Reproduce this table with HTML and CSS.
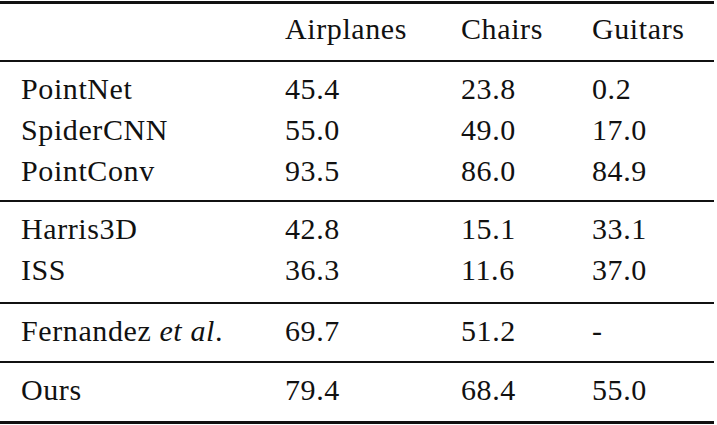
FILE: index.html
```html
<!DOCTYPE html>
<html lang="en">

<head>
	<meta charset="UTF-8">
	<meta name="viewport" content="width=device-width, initial-scale=1.0">
	<title>Results</title>
	<link rel="stylesheet" href="styles.css">
</head>

<body>
	<table class="results">
		<colgroup>
			<col class="c-name">
			<col class="c-air">
			<col class="c-chair">
			<col class="c-guitar">
		</colgroup>
		<thead>
			<tr>
				<th></th>
				<th>Airplanes</th>
				<th>Chairs</th>
				<th>Guitars</th>
			</tr>
		</thead>
		<tbody class="g1">
			<tr><td>PointNet</td><td>45.4</td><td>23.8</td><td>0.2</td></tr>
			<tr><td>SpiderCNN</td><td>55.0</td><td>49.0</td><td>17.0</td></tr>
			<tr><td>PointConv</td><td>93.5</td><td>86.0</td><td>84.9</td></tr>
		</tbody>
		<tbody class="g2">
			<tr><td>Harris3D</td><td>42.8</td><td>15.1</td><td>33.1</td></tr>
			<tr><td>ISS</td><td>36.3</td><td>11.6</td><td>37.0</td></tr>
		</tbody>
		<tbody class="g3">
			<tr><td>Fernandez <em>et al</em>.</td><td>69.7</td><td>51.2</td><td>-</td></tr>
		</tbody>
		<tbody class="g4 last">
			<tr><td>Ours</td><td>79.4</td><td>68.4</td><td>55.0</td></tr>
		</tbody>
	</table>
</body>

</html>
```

FILE: styles.css
```css
body {
	margin: 0;
	background: #fff;
	font-family: "Liberation Serif", "Times New Roman", serif;
}

.results {
	margin-top: 1px;
	width: 714px;
	table-layout: fixed;
	border-collapse: collapse;
	font-size: 30px;
	line-height: 41px;
	letter-spacing: 0.6px;
	color: #111;
}

.c-name { width: 264px; }
.c-air { width: 176px; }
.c-chair { width: 131px; }
.c-guitar { width: 143px; }

.results th,
.results td {
	padding: 0 0 0 21px;
	text-align: left;
	font-weight: normal;
	white-space: nowrap;
}

.results thead th {
	border-top: 3px solid #111;
	padding-top: 4px;
	padding-bottom: 11px;
}

.results tbody {
	border-top: 2px solid #111;
}

.results tbody tr:first-child td {
	padding-top: 6px;
}

/* booktabs-like spacing under each group */
.results tbody.g1 tr:last-child td { padding-bottom: 9px; }
.results tbody.g2 tr:last-child td { padding-bottom: 12px; }
.results tbody.g3 tr:last-child td { padding-bottom: 10px; }
.results tbody.g4 tr:last-child td { padding-bottom: 11px; }

.results tbody.last {
	border-bottom: 3px solid #111;
}

.results em {
	font-style: italic;
}
```
